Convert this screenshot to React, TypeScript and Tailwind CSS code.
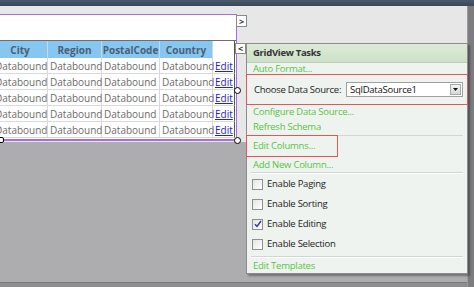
import React from "react";

const cols = ["City", "Region", "PostalCode", "Country"];
const widths = ["w-[55px]", "w-[54px]", "w-[58px]", "w-[53px]"];
const rows = [0, 1, 2, 3, 4];

function Check({ label, checked }: { label: string; checked?: boolean }) {
  return (
    <div className="h-[20px] flex items-center pl-[5px] gap-[4px]">
      <span className="w-[11px] h-[11px] border border-[#8f8f8f] bg-gradient-to-br from-[#e4e4e4] to-white flex items-center justify-center">
        {checked && (
          <svg width="8" height="8" viewBox="0 0 8 8">
            <path d="M1 4.2 L3 6.4 L7 1" fill="none" stroke="#2d3f8f" strokeWidth="1.5" />
          </svg>
        )}
      </span>
      <span className="text-[#222]">{label}</span>
    </div>
  );
}

function Sep() {
  return <div className="mx-[4px] h-[2px] border-t border-[#d2d6d1] border-b border-b-white" />;
}

export default function App() {
  return (
    <div className="relative w-[474px] h-[287px] overflow-hidden flex flex-col bg-[#e7e7e7] font-['Open_Sans',sans-serif]">
      {/* title bar */}
      <div className="h-[6px] bg-gradient-to-b from-[#4a5a6c] to-[#394757]" />

      <div className="flex-1 flex">
        <div className="flex-1 flex flex-col">
          {/* design surface (top) */}
          <div className="pt-[8px] pb-[1px]">
            <div className="relative w-[238px] ml-[-1px] border-t border-r border-b-2 border-[#a86ce0] bg-white">
              <div className="h-[25px]" />
              <div className="border-t border-[#6e6e6e] overflow-hidden text-[10px] leading-none">
                <div className="flex ml-[-6px] h-[17px]">
                  {cols.map((c, i) => (
                    <div
                      key={c}
                      className={`${widths[i]} bg-[#86c6ef] border-r border-[#b9dcf3] flex items-center justify-center font-bold text-[#4a6078]`}
                    >
                      {c}
                    </div>
                  ))}
                  <div className="w-[22px] bg-white border-r border-[#555]" />
                </div>
                {rows.map((r) => (
                  <div key={r} className="flex ml-[-6px] h-[16px]">
                    {cols.map((c, i) => (
                      <div
                        key={c}
                        className={`${widths[i]} border-r border-b border-[#d9d9d9] flex items-center pl-[2px] text-[#6b6b6b]`}
                      >
                        Databound
                      </div>
                    ))}
                    <div className="w-[22px] border-r border-b border-r-[#555] border-b-[#d9d9d9] flex items-center pl-[2px] text-[#2323c4] underline">
                      Edit
                    </div>
                  </div>
                ))}
                <div className="h-[1px]" />
              </div>

              {/* resize handles */}
              <span className="absolute right-[-5px] top-[72px] w-[7px] h-[7px] rounded-full bg-white border border-black" />
              <span className="absolute right-[-5px] bottom-[-5px] w-[7px] h-[7px] rounded-full bg-white border border-black" />
              <span className="absolute left-[-3px] bottom-[-4px] w-[8px] h-[6px] rounded-[2px] bg-white border border-black" />
            </div>
          </div>
          {/* design surface (below) */}
          <div className="flex-1 bg-[#adadb0]" />
          <div className="h-[5px] bg-[#8d8d8f] border-t border-[#7a7a7c]" />
        </div>
        <div className="w-[7px] bg-[#7d7d7f] border-l border-[#9a9a9a]" />
      </div>

      {/* smart tag glyphs */}
      <span className="absolute left-[236px] top-[15px] w-[11px] h-[12px] bg-white border border-[#8a8a8a] flex items-center justify-center text-[9px] leading-none font-bold text-[#333]">
        &gt;
      </span>
      <span className="absolute left-[235px] top-[43px] w-[11px] h-[11px] bg-white border border-[#8a8a8a] flex items-center justify-center text-[9px] leading-none font-bold text-[#333]">
        &lt;
      </span>

      {/* GridView Tasks panel */}
      <div className="absolute left-[246px] top-[43px] w-[222px] h-[231px] border border-[#8c8c8c] bg-[#eff3ef] shadow-[2px_2px_2px_rgba(0,0,0,0.35)] text-[9.5px] tracking-[-0.25px] leading-none flex flex-col">
        <div className="h-[19px] shrink-0 bg-gradient-to-b from-[#dcebd8] to-[#cde0c8] border-b border-[#bccfb8] flex items-center pl-[6px] font-bold text-[#333] text-[9.5px] tracking-[-0.3px]">
          GridView Tasks
        </div>
        <div className="h-[11px] flex items-center pl-[6px] text-[#55c545]">Auto Format...</div>
        <div className="h-[31px] mx-[-1px] border border-[#dc5a5a] flex items-center pl-[7px] pr-[4px]">
          <span className="text-[#222] w-[92px]">Choose Data Source:</span>
          <div className="flex-1 h-[15px] bg-white border border-[#a0a0a0] flex items-center pl-[3px] pr-[1px]">
            <span className="flex-1 text-[#111]">SqlDataSource1</span>
            <span className="w-[11px] h-[11px] bg-gradient-to-b from-[#f4f4f4] to-[#d6d6d6] border border-[#a8a8a8] flex items-center justify-center">
              <svg width="5" height="3" viewBox="0 0 5 3">
                <path d="M0 0 L5 0 L2.5 3 Z" fill="#111" />
              </svg>
            </span>
          </div>
        </div>
        <div className="h-[14px] flex items-center pl-[6px] text-[#55c545]">Configure Data Source...</div>
        <div className="h-[16px] flex items-center pl-[6px] text-[#55c545]">Refresh Schema</div>
        <div className="relative h-[22px] flex items-center pl-[6px] text-[#55c545]">
          <div className="absolute left-[4px] right-[4px] top-0 border-t border-[#d2d6d1]" />
          <div className="absolute left-[-1px] top-0 w-[92px] h-[22px] border border-[#dc5a5a]" />
          Edit Columns...
        </div>
        <div className="h-[15px] flex items-center pl-[6px] text-[#55c545]">Add New Column...</div>
        <Sep />
        <Check label="Enable Paging" />
        <Check label="Enable Sorting" />
        <Check label="Enable Editing" checked />
        <Check label="Enable Selection" />
        <div className="h-[2px]" />
        <Sep />
        <div className="flex-1 flex items-center pl-[6px] text-[#55c545]">Edit Templates</div>
      </div>
    </div>
  );
}
